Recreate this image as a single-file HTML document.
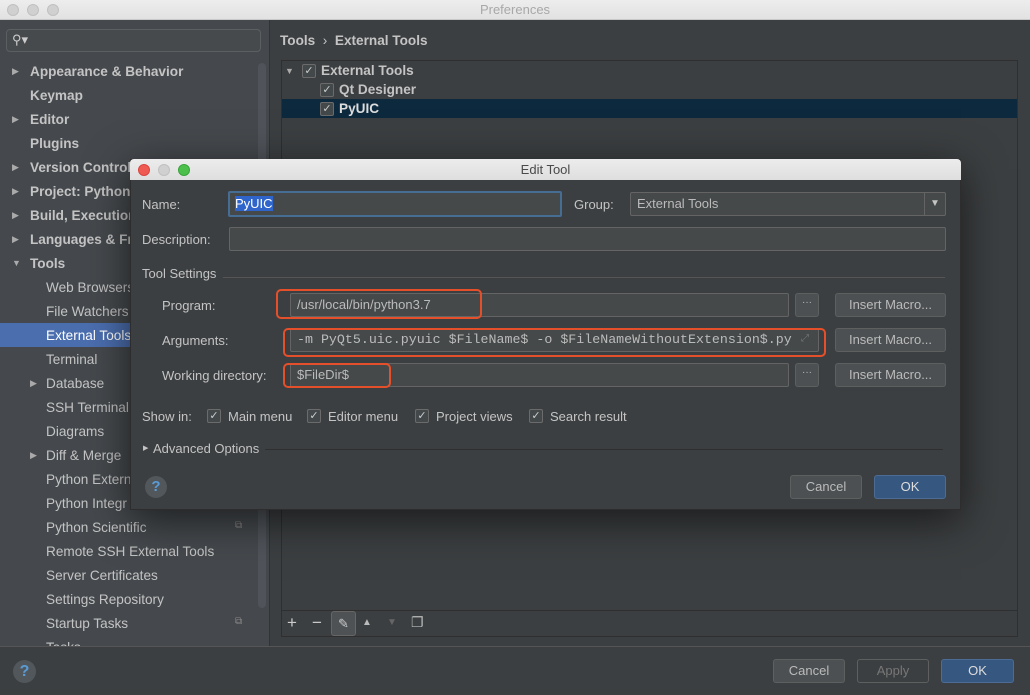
<!DOCTYPE html>
<html><head><meta charset="utf-8"><style>
*{box-sizing:border-box;margin:0;padding:0}
body{width:1030px;height:695px;overflow:hidden;background:#3c3f41;font-family:"Liberation Sans",sans-serif;font-size:13px;color:#bbbbbb;position:relative}
.abs{position:absolute}
.tb{left:0;top:0;width:1030px;height:20px;background:linear-gradient(#ededed,#e2e2e2);border-bottom:1px solid #c8c8c8;color:#a8a8a8;text-align:center;line-height:20px;font-size:13px}
.dot{width:12px;height:12px;border-radius:50%;top:4px;background:#d0d0d0;border:1px solid #c0c0c0}
.side{left:0;top:20px;width:270px;height:627px;background:#45494d;border-right:1px solid #333}
.it{position:absolute;white-space:nowrap;font-size:13px;color:#c4c4c4}
.s{font-size:13.6px}
.b{font-weight:bold;font-size:13.6px}
.arr{position:absolute;font-size:9px;color:#aaa}
.field{position:absolute;background:#45494a;border:1px solid #646464;border-radius:2px;color:#bbb;padding-left:6px;white-space:nowrap;overflow:hidden}
.btn{position:absolute;background:#4c5052;border:1px solid #5e6060;border-radius:3px;color:#bbb;text-align:center;font-size:13px}
.org{position:absolute;border:2px solid #e5502a;border-radius:5px}
.cb{position:absolute;width:14px;height:14px;border:1px solid #6b6b6b;border-radius:2px;background:#43494a;color:#ccc;font-size:11px;line-height:12px;text-align:center}
</style></head><body>
<div class="abs tb">Preferences</div>
<div class="abs dot" style="left:7px"></div><div class="abs dot" style="left:27px"></div><div class="abs dot" style="left:47px"></div>

<div class="abs side"></div>
<div class="abs" style="left:6px;top:29px;width:255px;height:23px;border:1px solid #5c5f62;border-radius:4px;background:#474a4d"></div>
<div class="abs" style="left:12px;top:32px;color:#ccc;font-size:13px">&#9906;▾</div>
<div class="abs" style="left:258px;top:63px;width:8px;height:545px;border-radius:4px;background:#50545a"></div>

<div class="arr" style="left:12px;top:66px">▶</div><div class="it b" style="left:30px;top:64px">Appearance &amp; Behavior</div>
<div class="it b" style="left:30px;top:88px">Keymap</div>
<div class="arr" style="left:12px;top:114px">▶</div><div class="it b" style="left:30px;top:112px">Editor</div>
<div class="it b" style="left:30px;top:136px">Plugins</div>
<div class="arr" style="left:12px;top:162px">▶</div><div class="it b" style="left:30px;top:160px">Version Control</div>
<div class="arr" style="left:12px;top:186px">▶</div><div class="it b" style="left:30px;top:184px">Project: Python</div>
<div class="arr" style="left:12px;top:210px">▶</div><div class="it b" style="left:30px;top:208px">Build, Execution</div>
<div class="arr" style="left:12px;top:234px">▶</div><div class="it b" style="left:30px;top:232px">Languages &amp; Fr</div>
<div class="arr" style="left:12px;top:258px">▼</div><div class="it b" style="left:30px;top:256px">Tools</div>
<div class="it s" style="left:46px;top:280px">Web Browsers</div>
<div class="it s" style="left:46px;top:304px">File Watchers</div>
<div class="abs" style="left:0;top:323px;width:130px;height:24px;background:#4b6eaf"></div>
<div class="it s" style="left:46px;top:328px;color:#fff">External Tools</div>
<div class="it s" style="left:46px;top:352px">Terminal</div>
<div class="arr" style="left:30px;top:378px">▶</div><div class="it s" style="left:46px;top:376px">Database</div>
<div class="it s" style="left:46px;top:400px">SSH Terminal</div>
<div class="it s" style="left:46px;top:424px">Diagrams</div>
<div class="arr" style="left:30px;top:450px">▶</div><div class="it s" style="left:46px;top:448px">Diff &amp; Merge</div>
<div class="it s" style="left:46px;top:472px">Python External</div>
<div class="it s" style="left:46px;top:496px">Python Integr</div>
<div class="it s" style="left:46px;top:520px">Python Scientific</div>
<div class="it s" style="left:46px;top:544px">Remote SSH External Tools</div>
<div class="it s" style="left:46px;top:568px">Server Certificates</div>
<div class="it s" style="left:46px;top:592px">Settings Repository</div>
<div class="it s" style="left:46px;top:616px">Startup Tasks</div>
<div class="it s" style="left:46px;top:640px;height:7px;overflow:hidden">Tasks</div>
<div class="it" style="left:235px;top:520px;font-size:10px;color:#888">⧉</div>
<div class="it" style="left:235px;top:616px;font-size:10px;color:#888">⧉</div>

<div class="it b" style="left:280px;top:33px">Tools &nbsp;<span style="font-weight:normal">›</span>&nbsp; External Tools</div>
<div class="abs" style="left:281px;top:60px;width:737px;height:577px;border:1px solid #2f2f2f;background:#3c3f41"></div>
<div class="abs" style="left:282px;top:610px;width:735px;height:1px;background:#2f2f2f"></div>
<div class="arr" style="left:285px;top:66px">▼</div>
<div class="cb" style="left:302px;top:64px">✓</div><div class="it b" style="left:321px;top:63px">External Tools</div>
<div class="cb" style="left:320px;top:83px">✓</div><div class="it b" style="left:339px;top:82px">Qt Designer</div>
<div class="abs" style="left:282px;top:99px;width:735px;height:19px;background:#0d293e"></div>
<div class="cb" style="left:320px;top:102px">✓</div><div class="it b" style="left:339px;top:101px;color:#ddd">PyUIC</div>
<div class="it" style="left:287px;top:613px;font-size:17px;color:#ccc">+</div>
<div class="it" style="left:312px;top:613px;font-size:17px;color:#ccc">−</div>
<div class="abs" style="left:331px;top:611px;width:25px;height:25px;border:1px solid #666;border-radius:3px;background:#4e5254;color:#ccc;text-align:center;line-height:23px">✎</div>
<div class="it" style="left:362px;top:617px;font-size:10px;color:#bbb">▲</div>
<div class="it" style="left:387px;top:617px;font-size:10px;color:#666">▼</div>
<div class="it" style="left:411px;top:614px;font-size:14px;color:#bbb">❐</div>

<div class="abs" style="left:0;top:646px;width:1030px;height:1px;background:#555"></div>
<div class="abs" style="left:13px;top:660px;width:23px;height:23px;border-radius:50%;background:#51575b;color:#5b9bd5;font-weight:bold;font-size:16px;text-align:center;line-height:23px">?</div>
<div class="btn" style="left:773px;top:659px;width:72px;height:24px;line-height:22px">Cancel</div>
<div class="btn" style="left:857px;top:659px;width:72px;height:24px;line-height:22px;background:#3c3f41;color:#777">Apply</div>
<div class="btn" style="left:941px;top:659px;width:73px;height:24px;line-height:22px;background:#365880;border-color:#4c6c96;color:#ddd">OK</div>

<!-- dialog -->
<div class="abs" style="left:130px;top:159px;width:831px;height:351px;background:#3c3f41;box-shadow:0 10px 40px rgba(0,0,0,.6);border:1px solid #2d2d2d"></div>
<div class="abs" style="left:130px;top:159px;width:831px;height:21px;background:linear-gradient(#ececec,#dedede);border-radius:4px 4px 0 0;text-align:center;line-height:21px;color:#4a4a4a">Edit Tool</div>
<div class="abs dot" style="left:138px;top:164px;background:#ef5b53;border-color:#d8463f"></div>
<div class="abs dot" style="left:158px;top:164px"></div>
<div class="abs dot" style="left:178px;top:164px;background:#4cc04a;border-color:#3aa53a"></div>

<div class="it" style="left:142px;top:197px">Name:</div>
<div class="field" style="left:228px;top:191px;width:334px;height:26px;border:2px solid #466d94;line-height:22px;padding-left:5px"><span style="background:#2f65ca;color:#fff">PyUIC</span></div>
<div class="it" style="left:574px;top:197px">Group:</div>
<div class="field" style="left:630px;top:192px;width:316px;height:24px;line-height:22px">External Tools</div>
<div class="abs" style="left:924px;top:193px;width:1px;height:22px;background:#646464"></div>
<div class="it" style="left:930px;top:198px;font-size:10px">▼</div>
<div class="it" style="left:142px;top:232px">Description:</div>
<div class="field" style="left:229px;top:227px;width:717px;height:24px"></div>
<div class="it" style="left:142px;top:266px">Tool Settings</div>
<div class="abs" style="left:223px;top:277px;width:722px;height:1px;background:#555"></div>

<div class="it" style="left:162px;top:298px">Program:</div>
<div class="field" style="left:290px;top:293px;width:499px;height:24px;line-height:22px">/usr/local/bin/python3.7</div>
<div class="btn" style="left:795px;top:293px;width:24px;height:24px;line-height:18px;font-size:10px">···</div>
<div class="btn" style="left:835px;top:293px;width:111px;height:24px;line-height:22px">Insert Macro...</div>
<div class="org" style="left:276px;top:289px;width:206px;height:30px"></div>

<div class="it" style="left:162px;top:333px">Arguments:</div>
<div class="field" style="left:290px;top:328px;width:529px;height:24px;line-height:22px;font-family:'Liberation Mono',monospace;font-size:13.3px">-m PyQt5.uic.pyuic $FileName$ -o $FileNameWithoutExtension$.py</div>
<div class="it" style="left:801px;top:333px;font-size:10px;color:#777">⤢</div>
<div class="btn" style="left:835px;top:328px;width:111px;height:24px;line-height:22px">Insert Macro...</div>
<div class="org" style="left:283px;top:328px;width:543px;height:29px"></div>

<div class="it" style="left:162px;top:368px">Working directory:</div>
<div class="field" style="left:290px;top:363px;width:499px;height:24px;line-height:22px">$FileDir$</div>
<div class="btn" style="left:795px;top:363px;width:24px;height:24px;line-height:18px;font-size:10px">···</div>
<div class="btn" style="left:835px;top:363px;width:111px;height:24px;line-height:22px">Insert Macro...</div>
<div class="org" style="left:283px;top:363px;width:108px;height:25px"></div>

<div class="it" style="left:142px;top:409px">Show in:</div>
<div class="cb" style="left:207px;top:409px">✓</div><div class="it" style="left:228px;top:409px">Main menu</div>
<div class="cb" style="left:307px;top:409px">✓</div><div class="it" style="left:328px;top:409px">Editor menu</div>
<div class="cb" style="left:415px;top:409px">✓</div><div class="it" style="left:436px;top:409px">Project views</div>
<div class="cb" style="left:529px;top:409px">✓</div><div class="it" style="left:550px;top:409px">Search result</div>
<div class="it" style="left:143px;top:444px;font-size:7px">▶</div>
<div class="it" style="left:153px;top:441px">Advanced Options</div>
<div class="abs" style="left:265px;top:449px;width:678px;height:1px;background:#2f2f2f"></div>
<div class="abs" style="left:145px;top:476px;width:22px;height:22px;border-radius:50%;background:#51575b;color:#5b9bd5;font-weight:bold;font-size:15px;text-align:center;line-height:22px">?</div>
<div class="btn" style="left:790px;top:475px;width:72px;height:24px;line-height:22px">Cancel</div>
<div class="btn" style="left:874px;top:475px;width:72px;height:24px;line-height:22px;background:#365880;border-color:#4c6c96;color:#ddd">OK</div>
</body></html>
